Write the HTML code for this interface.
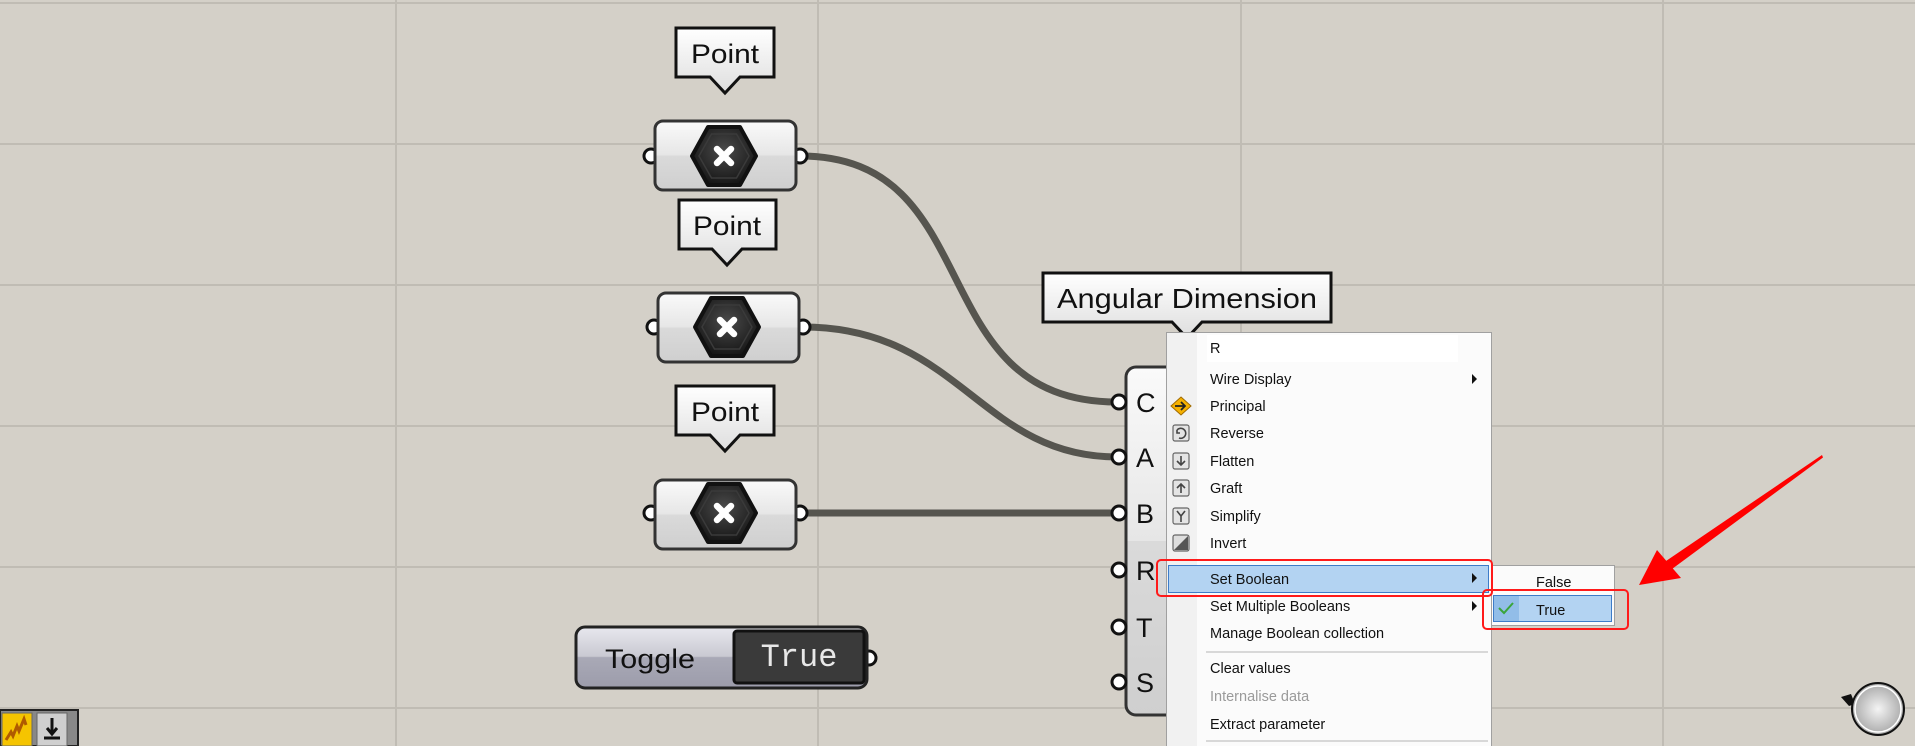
<!DOCTYPE html>
<html><head><meta charset="utf-8"><style>
html,body{margin:0;padding:0;background:#d4d0c8;overflow:hidden}
svg{display:block}
.lbl{font-family:"Liberation Sans",sans-serif;}
</style></head><body>
<svg width="1915" height="746" viewBox="0 0 1915 746" xmlns="http://www.w3.org/2000/svg">
<defs>
<linearGradient id="cg" x1="0" y1="0" x2="0" y2="1">
<stop offset="0" stop-color="#fafafa"/><stop offset="0.5" stop-color="#e6e6e6"/><stop offset="0.5" stop-color="#dadada"/><stop offset="1" stop-color="#cfcfcf"/></linearGradient>
<linearGradient id="lg" x1="0" y1="0" x2="0" y2="1">
<stop offset="0" stop-color="#ffffff"/><stop offset="1" stop-color="#dedede"/></linearGradient>
<linearGradient id="tg" x1="0" y1="0" x2="0" y2="1">
<stop offset="0" stop-color="#e8e8ee"/><stop offset="0.48" stop-color="#c9c9d2"/><stop offset="0.5" stop-color="#a9a9b6"/><stop offset="1" stop-color="#9c9cab"/></linearGradient>
<radialGradient id="hg" cx="0.5" cy="0.4" r="0.6"><stop offset="0" stop-color="#4a4a4a"/><stop offset="1" stop-color="#161616"/></radialGradient>
<radialGradient id="rg" cx="0.5" cy="0.5" r="0.5"><stop offset="0" stop-color="#f4f4f4"/><stop offset="1" stop-color="#a8a8a8"/></radialGradient>
<g id="hex">
<polygon points="-32,0 -16,-29 16,-29 32,0 16,29 -16,29" fill="url(#hg)" stroke="#111" stroke-width="4" stroke-linejoin="round"/>
<polygon points="-25,0 -12.5,-22 12.5,-22 25,0 12.5,22 -12.5,22" fill="none" stroke="#3a3a3a" stroke-width="1.5"/>
<path d="M-7,-7 L7,7 M7,-7 L-7,7" stroke="#fff" stroke-width="6.5" stroke-linecap="round"/>
</g>
</defs>
<!-- grid -->
<g stroke="#c0bcb4" stroke-width="2">
<line x1="396" y1="0" x2="396" y2="746"/><line x1="818" y1="0" x2="818" y2="746"/>
<line x1="1241" y1="0" x2="1241" y2="746"/><line x1="1663" y1="0" x2="1663" y2="746"/>
<line x1="0" y1="3" x2="1915" y2="3"/><line x1="0" y1="144" x2="1915" y2="144"/>
<line x1="0" y1="285" x2="1915" y2="285"/><line x1="0" y1="426" x2="1915" y2="426"/>
<line x1="0" y1="567" x2="1915" y2="567"/><line x1="0" y1="708" x2="1915" y2="708"/>
</g>
<!-- wires -->
<g stroke="#56554f" stroke-width="7" fill="none">
<path d="M800,156 C990,156 920,402 1117,402"/>
<path d="M803,327 C960,327 980,457 1117,457"/>
<path d="M800,513 L1117,513"/>
</g>
<!-- point labels -->
<g class="lbl" font-size="27" fill="#111">
<g><path d="M676,28 H774 V77 H740 L725,93 L710,77 H676 Z" fill="url(#lg)" stroke="#111" stroke-width="3"/><text x="725" y="63" text-anchor="middle" textLength="68" lengthAdjust="spacingAndGlyphs">Point</text></g>
<g><path d="M679,200 H776 V249 H742 L727,265 L712,249 H679 Z" fill="url(#lg)" stroke="#111" stroke-width="3"/><text x="727" y="235" text-anchor="middle" textLength="68" lengthAdjust="spacingAndGlyphs">Point</text></g>
<g><path d="M676,386 H774 V435 H740 L725,451 L710,435 H676 Z" fill="url(#lg)" stroke="#111" stroke-width="3"/><text x="725" y="421" text-anchor="middle" textLength="68" lengthAdjust="spacingAndGlyphs">Point</text></g>
</g>
<!-- point components -->
<g stroke="#111" stroke-width="3">
<circle cx="651" cy="156" r="7" fill="#fff"/><circle cx="800" cy="156" r="7" fill="#fff"/>
<rect x="655" y="121" width="141" height="69" rx="8" fill="url(#cg)" stroke="#333"/>
<circle cx="654" cy="327" r="7" fill="#fff"/><circle cx="803" cy="327" r="7" fill="#fff"/>
<rect x="658" y="293" width="141" height="69" rx="8" fill="url(#cg)" stroke="#333"/>
<circle cx="651" cy="513" r="7" fill="#fff"/><circle cx="800" cy="513" r="7" fill="#fff"/>
<rect x="655" y="480" width="141" height="69" rx="8" fill="url(#cg)" stroke="#333"/>
</g>
<use href="#hex" x="724" y="156"/><use href="#hex" x="727" y="327"/><use href="#hex" x="724" y="513"/>
<!-- angular dimension -->
<g stroke="#111" stroke-width="3">
<rect x="1126" y="367" width="80" height="348" rx="10" fill="url(#cg)" stroke="#333"/>
<g fill="#fff"><circle cx="1119" cy="402" r="7"/><circle cx="1119" cy="457" r="7"/><circle cx="1119" cy="513" r="7"/><circle cx="1119" cy="570" r="7"/><circle cx="1119" cy="627" r="7"/><circle cx="1119" cy="682" r="7"/></g>
</g>
<g class="lbl" font-size="27" fill="#111">
<text x="1136" y="412">C</text><text x="1136" y="467">A</text><text x="1136" y="523">B</text><text x="1136" y="580">R</text><text x="1136" y="637">T</text><text x="1136" y="692">S</text>
<path d="M1043,273 H1331 V322 H1202 L1187,338 L1172,322 H1043 Z" fill="url(#lg)" stroke="#111" stroke-width="3"/>
<text x="1187" y="308" text-anchor="middle" font-size="28" textLength="260" lengthAdjust="spacingAndGlyphs">Angular Dimension</text>
</g>
<!-- toggle -->
<circle cx="869" cy="658" r="7" fill="#fff" stroke="#111" stroke-width="3"/>
<rect x="576" y="627" width="291" height="61" rx="9" fill="url(#tg)" stroke="#222" stroke-width="3"/>
<rect x="734" y="631" width="130" height="52" rx="3" fill="#3a3a3a" stroke="#111" stroke-width="3"/>
<text x="605" y="668" class="lbl" font-size="27" fill="#111" textLength="90" lengthAdjust="spacingAndGlyphs">Toggle</text>
<text x="799" y="666" text-anchor="middle" font-family="Liberation Mono,monospace" font-size="32" fill="#e8e8e8">True</text>
<!-- bottom-left icons -->
<rect x="0" y="710" width="78" height="36" fill="#888" stroke="#222" stroke-width="2"/>
<rect x="2" y="713" width="30" height="33" fill="#f5c400" stroke="#666"/>
<path d="M6,740 l5,-8 l2,4 l4,-10 l2,5 l5,-12 l2,6" stroke="#b05a00" stroke-width="3" fill="none"/>
<rect x="37" y="713" width="30" height="33" fill="#cfcfcf" stroke="#666"/>
<path d="M52,718 v14 M47,728 l5,6 l5,-6 M44,738 h16" stroke="#111" stroke-width="3" fill="none"/>
<!-- bottom right navigator -->
<path d="M1841,697 l10,-3 l4,10 l-6,2 z" fill="#111"/>
<circle cx="1878" cy="709" r="26" fill="url(#rg)" stroke="#111" stroke-width="2"/>
<circle cx="1878" cy="709" r="23" fill="none" stroke="#fff" stroke-width="1.5"/>
<!-- context menu -->
<rect x="1166.5" y="332.5" width="325" height="420" fill="#fbfbfb" stroke="#a0a0a0"/>
<rect x="1167" y="333" width="30" height="413" fill="#f1f1f1"/>
<rect x="1207" y="335" width="251" height="27" fill="#ffffff"/>
<rect x="1168.5" y="565.5" width="320" height="27" fill="#b3d3f2" stroke="#3d7cc9"/>
<line x1="1206" y1="652" x2="1488" y2="652" stroke="#d8d8d8" stroke-width="2"/>
<line x1="1206" y1="741" x2="1488" y2="741" stroke="#d8d8d8" stroke-width="2"/>
<g class="lbl" font-size="14.5" fill="#111">
<text x="1210" y="353">R</text>
<text x="1210" y="384">Wire Display</text>
<text x="1210" y="411">Principal</text>
<text x="1210" y="438">Reverse</text>
<text x="1210" y="466">Flatten</text>
<text x="1210" y="493">Graft</text>
<text x="1210" y="521">Simplify</text>
<text x="1210" y="548">Invert</text>
<text x="1210" y="584">Set Boolean</text>
<text x="1210" y="611">Set Multiple Booleans</text>
<text x="1210" y="638">Manage Boolean collection</text>
<text x="1210" y="673">Clear values</text>
<text x="1210" y="701" fill="#9a9a9a">Internalise data</text>
<text x="1210" y="729">Extract parameter</text>
</g>
<g fill="#111"><path d="M1472,374 l5,5 l-5,5z"/><path d="M1472,573 l5,5 l-5,5z"/><path d="M1472,601 l5,5 l-5,5z"/></g>
<!-- gutter icons -->
<path d="M1181,397 l10,9 l-10,9 l-10,-9z" fill="#f6b100" stroke="#a06a00"/>
<path d="M1175,406 h10 M1181,402 l4,4 l-4,4" stroke="#222" stroke-width="1.8" fill="none"/>
<g fill="#e4e4e4" stroke="#666" stroke-width="1.2">
<rect x="1173" y="425" width="16" height="16" rx="2"/><rect x="1173" y="453" width="16" height="16" rx="2"/>
<rect x="1173" y="480" width="16" height="16" rx="2"/><rect x="1173" y="508" width="16" height="16" rx="2"/>
<rect x="1173" y="535" width="16" height="16" rx="2" fill="#ddd"/>
</g>
<path d="M1174,550 L1188,536 V550 Z" fill="#555"/>
<g stroke="#444" stroke-width="1.6" fill="none">
<path d="M1177,430 a5,5 0 1 1 2,8 M1177,430 v3 h3"/>
<path d="M1181,456 v9 M1177,461 l4,4 l4,-4"/>
<path d="M1181,493 v-9 M1177,488 l4,-4 l4,4"/>
<path d="M1177,511 l4,5 l4,-5 M1181,516 v6"/>
</g>
<!-- submenu -->
<rect x="1491.5" y="565.5" width="123" height="60" fill="#fbfbfb" stroke="#a0a0a0"/>
<rect x="1493.5" y="595.5" width="118" height="26" fill="#b3d3f2" stroke="#3d7cc9"/>
<rect x="1494" y="596" width="25" height="25" fill="#92bde8"/>
<path d="M1499,608 l5,5 l9,-10" stroke="#3aa53a" stroke-width="2" fill="none"/>
<g class="lbl" font-size="14.5" fill="#111"><text x="1536" y="587">False</text><text x="1536" y="615">True</text></g>
<!-- red highlight boxes -->
<rect x="1157" y="560" width="335" height="36" rx="4" fill="none" stroke="#ff1a1a" stroke-width="2"/>
<rect x="1483" y="590" width="145" height="39" rx="4" fill="none" stroke="#ff1a1a" stroke-width="2"/>
<!-- red arrow -->
<path d="M1822,455 L1823,457.5 L1672,569 L1666,561 Z" fill="#ff0000"/>
<path d="M1639,585 L1657,550 L1681,578 Z" fill="#ff0000"/>
</svg>
</body></html>
